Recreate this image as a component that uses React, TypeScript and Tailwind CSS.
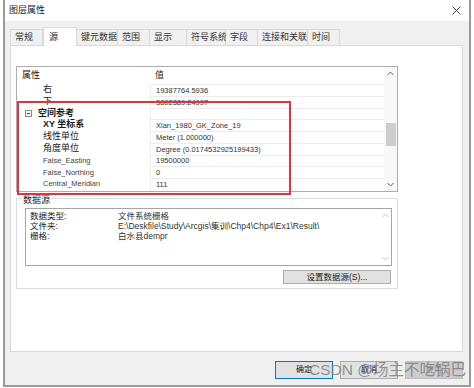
import React from "react";

const tabs = ["常规", "源", "键元数据", "范围", "显示", "符号系统", "字段", "连接和关联", "时间"];
const tabWidths = [33, 34, 41, 32, 37, 39, 32, 50, 32];

type Row = { name: string; value: string; indent: number; bold?: boolean; cn?: boolean; group?: boolean };

const rows: Row[] = [
  { name: "右", value: "19387764.5936", indent: 26, cn: true },
  { name: "下", value: "3802389.24997", indent: 26, cn: true },
  { name: "空间参考", value: "", indent: 20, bold: true, cn: true, group: true },
  { name: "XY 坐标系", value: "Xian_1980_GK_Zone_19", indent: 26, bold: true, cn: true },
  { name: "线性单位", value: "Meter (1.000000)", indent: 26, cn: true },
  { name: "角度单位", value: "Degree (0.0174532925199433)", indent: 26, cn: true },
  { name: "False_Easting", value: "19500000", indent: 26 },
  { name: "False_Northing", value: "0", indent: 26 },
  { name: "Central_Meridian", value: "111", indent: 26 },
];

const source = [
  ["数据类型:", "文件系统栅格"],
  ["文件夹:", "E:\\Deskfile\\Study\\Arcgis\\集训\\Chp4\\Chp4\\Ex1\\Result\\"],
  ["栅格:", "白水县dempr"],
];

function Caret({ up, color = "#606060" }: { up?: boolean; color?: string }) {
  return (
    <svg width="7" height="5" viewBox="0 0 7 5">
      <path d={up ? "M0.5 4 L3.5 1 L6.5 4" : "M0.5 1 L3.5 4 L6.5 1"} fill="none" stroke={color} strokeWidth="1" />
    </svg>
  );
}

export default function App() {
  return (
    <div className="w-[474px] h-[388px] bg-white pl-[3px] relative overflow-hidden font-['Liberation_Sans','Noto_Sans_CJK_SC',sans-serif] text-[#1a1a1a]">
      <div className="w-[468px] h-[387px] border-x-2 border-b-2 border-[#9a9a9a] bg-[#f0f0f0] flex flex-col">
        {/* title bar */}
        <div className="h-[21px] bg-white flex items-center justify-between pl-[4px] pr-[8px]">
          <span className="text-[9px] text-[#222]">图层属性</span>
          <svg width="9" height="9" viewBox="0 0 9 9">
            <path d="M0.5 0.5 L8.5 8.5 M8.5 0.5 L0.5 8.5" stroke="#333" strokeWidth="0.9" />
          </svg>
        </div>

        {/* tabs */}
        <div className="h-[24px] flex items-end pl-[5px]">
          {tabs.map((t, i) =>
            i === 1 ? (
              <div
                key={t}
                style={{ width: tabWidths[i] }}
                className="h-[19px] bg-white border-x border-t border-[#d9d9d9] -mb-px relative z-10 text-[9px] whitespace-nowrap flex items-start pt-[3px] pl-[5px]"
              >
                {t}
              </div>
            ) : (
              <div
                key={t}
                style={{ width: tabWidths[i] }}
                className="h-[16px] bg-[#f0f0f0] border-t border-r border-[#d9d9d9] first:border-l text-[9px] text-[#333] whitespace-nowrap flex items-center pl-[4px]"
              >
                {t}
              </div>
            )
          )}
        </div>

        {/* panel */}
        <div className="ml-[5px] w-[453px] h-[307px] bg-white border border-[#d9d9d9] pt-[20px] pl-[5px]">
          {/* property grid */}
          <div className="w-[382px] h-[126px] border border-[#adadad] flex overflow-hidden">
            <div className="flex-1 flex flex-col overflow-hidden">
              <div className="h-[17px] shrink-0 flex items-center text-[9px]">
                <div className="w-[133px] pl-[5px]">属性</div>
                <div className="pl-[5px]">值</div>
              </div>
              {rows.map((r) => (
                <div key={r.name} className="h-[11.75px] shrink-0 flex items-center">
                  <div
                    className={`w-[133px] h-full flex items-center whitespace-nowrap ${r.cn ? "text-[9px]" : "text-[7.5px] text-[#444]"} ${r.bold ? "font-bold" : ""}`}
                    style={{ paddingLeft: r.group ? 8 : r.indent }}
                  >
                    {r.group && (
                      <span className="w-[7px] h-[7px] border border-[#888] mr-[6px] flex items-center justify-center">
                        <span className="w-[3px] h-px bg-[#444]" />
                      </span>
                    )}
                    {r.name}
                  </div>
                  <div className="flex-1 h-full border-t border-l border-[#ececec] pl-[5px] text-[7.5px] text-[#333] whitespace-nowrap flex items-center">
                    {r.value}
                  </div>
                </div>
              ))}
            </div>
            {/* scrollbar */}
            <div className="w-[13px] bg-[#f8f8f8] flex flex-col items-center justify-between py-[4px]">
              <Caret up />
              <div className="flex-1 w-full flex flex-col pt-[47px]">
                <div className="w-[10px] mx-auto h-[23px] bg-[#cdcdcd]" />
              </div>
              <Caret />
            </div>
          </div>

          {/* data source group */}
          <div className="relative mt-[6px] w-[382px] h-[91px] border border-[#dcdcdc] pt-[9px] pl-[8px]">
            <span className="absolute -top-[4px] left-[5px] bg-white px-[1px] text-[9px] leading-[10px]">数据源</span>
            <div className="w-[367px] h-[58px] border border-[#a5a5a5] flex">
              <div className="flex-1 pt-[2px] pl-[4px] text-[8.5px] leading-[10px]">
                {source.map(([k, v]) => (
                  <div key={k} className="flex">
                    <div className="w-[88px]">{k}</div>
                    <div className="text-[#333]">{v}</div>
                  </div>
                ))}
              </div>
              <div className="w-[11px] flex flex-col items-center justify-between py-[4px]">
                <Caret up color="#c0c0c0" />
                <Caret color="#c0c0c0" />
              </div>
            </div>
            <div className="flex justify-end pr-[6px] mt-[4px]">
              <div className="w-[108px] h-[14px] bg-[#e1e1e1] border border-[#adadad] text-[8.5px] flex items-center justify-center">
                设置数据源(S)...
              </div>
            </div>
          </div>
        </div>

        {/* bottom buttons */}
        <div className="flex justify-end gap-[7px] pr-[6px] pt-[9px]">
          <div className="w-[58px] h-[18px] bg-[#e1e1e1] border border-[#0078d7] text-[8px] flex items-center justify-center">确定</div>
          <div className="w-[58px] h-[18px] bg-[#e1e1e1] border border-[#adadad] text-[8px] flex items-center justify-center">取消</div>
          <div className="w-[58px] h-[18px] bg-[#cccccc] border border-[#bfbfbf] text-[8px] text-[#838383] flex items-center justify-center">应用</div>
        </div>
      </div>

      {/* annotation box */}
      <div className="absolute left-[17px] top-[101px] w-[274px] h-[94px] border-2 border-[#e8303a]" />

      {/* watermark */}
      <div className="absolute left-[309px] top-[360px] text-[15.5px] leading-[20px] text-[#7a7a7a]/80 whitespace-nowrap">
        CSDN @场主不吃锅巴
      </div>
    </div>
  );
}
